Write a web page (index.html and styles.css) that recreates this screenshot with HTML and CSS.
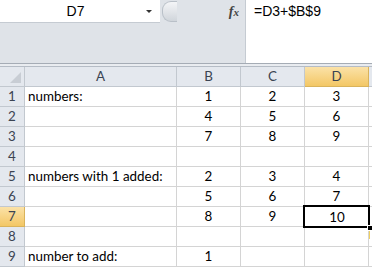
FILE: index.html
```html
<!DOCTYPE html>
<html>
<head>
<meta charset="utf-8">
<link rel="stylesheet" href="styles.css">
</head>
<body>
<div class="top">
  <div class="left">
    <div class="namerow">
      <div class="namebox"><span class="ref">D7</span><span class="arrow"></span></div>
      <div class="grip"><span class="knob"></span></div>
      <div class="fx">f<span class="x">x</span></div>
    </div>
  </div>
  <div class="formula">=D3+$B$9</div>
</div>
<div class="gap"></div>
<div class="sheet">
  <div class="corner"><span class="tri"></span></div>
  <div class="ch">A</div><div class="ch">B</div><div class="ch">C</div><div class="ch sel">D</div><div class="ch e"></div>

  <div class="rh">1</div><div class="c l">numbers:</div><div class="c">1</div><div class="c">2</div><div class="c">3</div><div class="c e"></div>
  <div class="rh">2</div><div class="c l"></div><div class="c">4</div><div class="c">5</div><div class="c">6</div><div class="c e"></div>
  <div class="rh">3</div><div class="c l"></div><div class="c">7</div><div class="c">8</div><div class="c">9</div><div class="c e"></div>
  <div class="rh">4</div><div class="c l"></div><div class="c"></div><div class="c"></div><div class="c"></div><div class="c e"></div>
  <div class="rh">5</div><div class="c l">numbers with 1 added:</div><div class="c">2</div><div class="c">3</div><div class="c">4</div><div class="c e"></div>
  <div class="rh">6</div><div class="c l"></div><div class="c">5</div><div class="c">6</div><div class="c">7</div><div class="c e"></div>
  <div class="rh sel">7</div><div class="c l"></div><div class="c">8</div><div class="c">9</div><div class="c active">10<span class="handle"></span></div><div class="c e"></div>
  <div class="rh">8</div><div class="c l"></div><div class="c"></div><div class="c"></div><div class="c"></div><div class="c e"><span class="yl"></span></div>
  <div class="rh">9</div><div class="c l">number to add:</div><div class="c">1</div><div class="c"></div><div class="c"></div><div class="c e"></div>
</div>
</body>
</html>
```
FILE: styles.css
```css
html, body { margin: 0; padding: 0; }
body {
  width: 372px;
  height: 269px;
  overflow: hidden;
  background: #ffffff;
  font-family: "Lato", "Liberation Sans", sans-serif;
}
.top {
  display: flex;
  height: 63px;
  background: #dfe3e8;
  border-bottom: 1px solid #a5acb5;
}
.left { width: 245px; }
.namerow { display: flex; height: 23px; align-items: stretch; }
.namebox {
  width: 160px;
  background: #fff;
  border-bottom: 1px solid #c5cbd2;
  display: flex;
  align-items: center;
}
.ref {
  flex: 1;
  text-align: center;
  font-family: "Liberation Sans", sans-serif;
  font-size: 14px;
  color: #000;
  padding-left: 5px;
}
.arrow {
  width: 0; height: 0;
  border-left: 3px solid transparent;
  border-right: 3px solid transparent;
  border-top: 3px solid #333;
  margin-right: 8px;
}
.grip {
  width: 18px;
  display: flex;
  align-items: center;
}
.knob {
  width: 14px; height: 19px;
  border-radius: 9px 0 0 9px;
  background: linear-gradient(#f4f5f7, #d0d5db);
  border: 1px solid #b9c0c8;
  border-right: none;
  margin-left: 2px;
}
.fx {
  flex: 1;
  text-align: right;
  padding-right: 6px;
  font-family: "Liberation Serif", serif;
  font-style: italic;
  font-weight: bold;
  font-size: 14px;
  line-height: 23px;
  color: #444;
}
.fx .x { font-size: 11px; }
.formula {
  flex: 1;
  background: #fff;
  border-left: 1px solid #c5cbd2;
  font-family: "Liberation Sans", sans-serif;
  font-size: 14px;
  padding: 3px 0 0 8px;
  color: #000;
}
.gap { height: 2px; background: #e9ecf0; border-bottom: 1px solid #b5bcc5; }
.sheet {
  display: grid;
  grid-template-columns: 25px 152px 64px 64px 64px 3px;
  grid-auto-rows: 20px;
  font-size: 13.4px;
}
.sheet > div {
  box-sizing: border-box;
  border-right: 1px solid #d4d4d4;
  border-bottom: 1px solid #d4d4d4;
  display: flex;
  align-items: center;
  justify-content: center;
  color: #000;
  line-height: 1;
  white-space: nowrap;
  padding-top: 1px;
}
.corner, .ch, .rh {
  background: #e4e8ee;
}
.sheet > .corner, .sheet > .ch, .sheet > .rh {
  color: #3b4452;
  border-right: 1px solid #c2c8cf;
  border-bottom: 1px solid #c2c8cf;
}
.sheet > .sel {
  background: linear-gradient(#fbe2a8, #f3c765);
  border-right-color: #d9b35b;
  border-bottom-color: #d9b35b;
}
.corner { position: relative; }
.tri {
  position: absolute;
  right: 3px; bottom: 3px;
  width: 0; height: 0;
  border-left: 11px solid transparent;
  border-bottom: 11px solid #c8cdd4;
}
.sheet > .l { justify-content: flex-start; padding-left: 3px; }
.sheet > .e { border-right: none; }
.sheet > .active {
  position: relative;
  border: none;
}
.active::before {
  content: "";
  position: absolute;
  left: -2px; top: -2px; right: -1px; bottom: -1px;
  border: 2px solid #000;
}
.handle {
  position: absolute;
  right: -4px; bottom: -4px;
  width: 6px; height: 6px;
  background: #000;
  border: 1px solid #fff;
  box-sizing: border-box;
  z-index: 2;
}
.c.e { position: relative; }
.c.e .yl {
  position: absolute;
  left: 0; top: 2px;
  width: 1px; height: 10px;
  background: #f0d060;
}
```
